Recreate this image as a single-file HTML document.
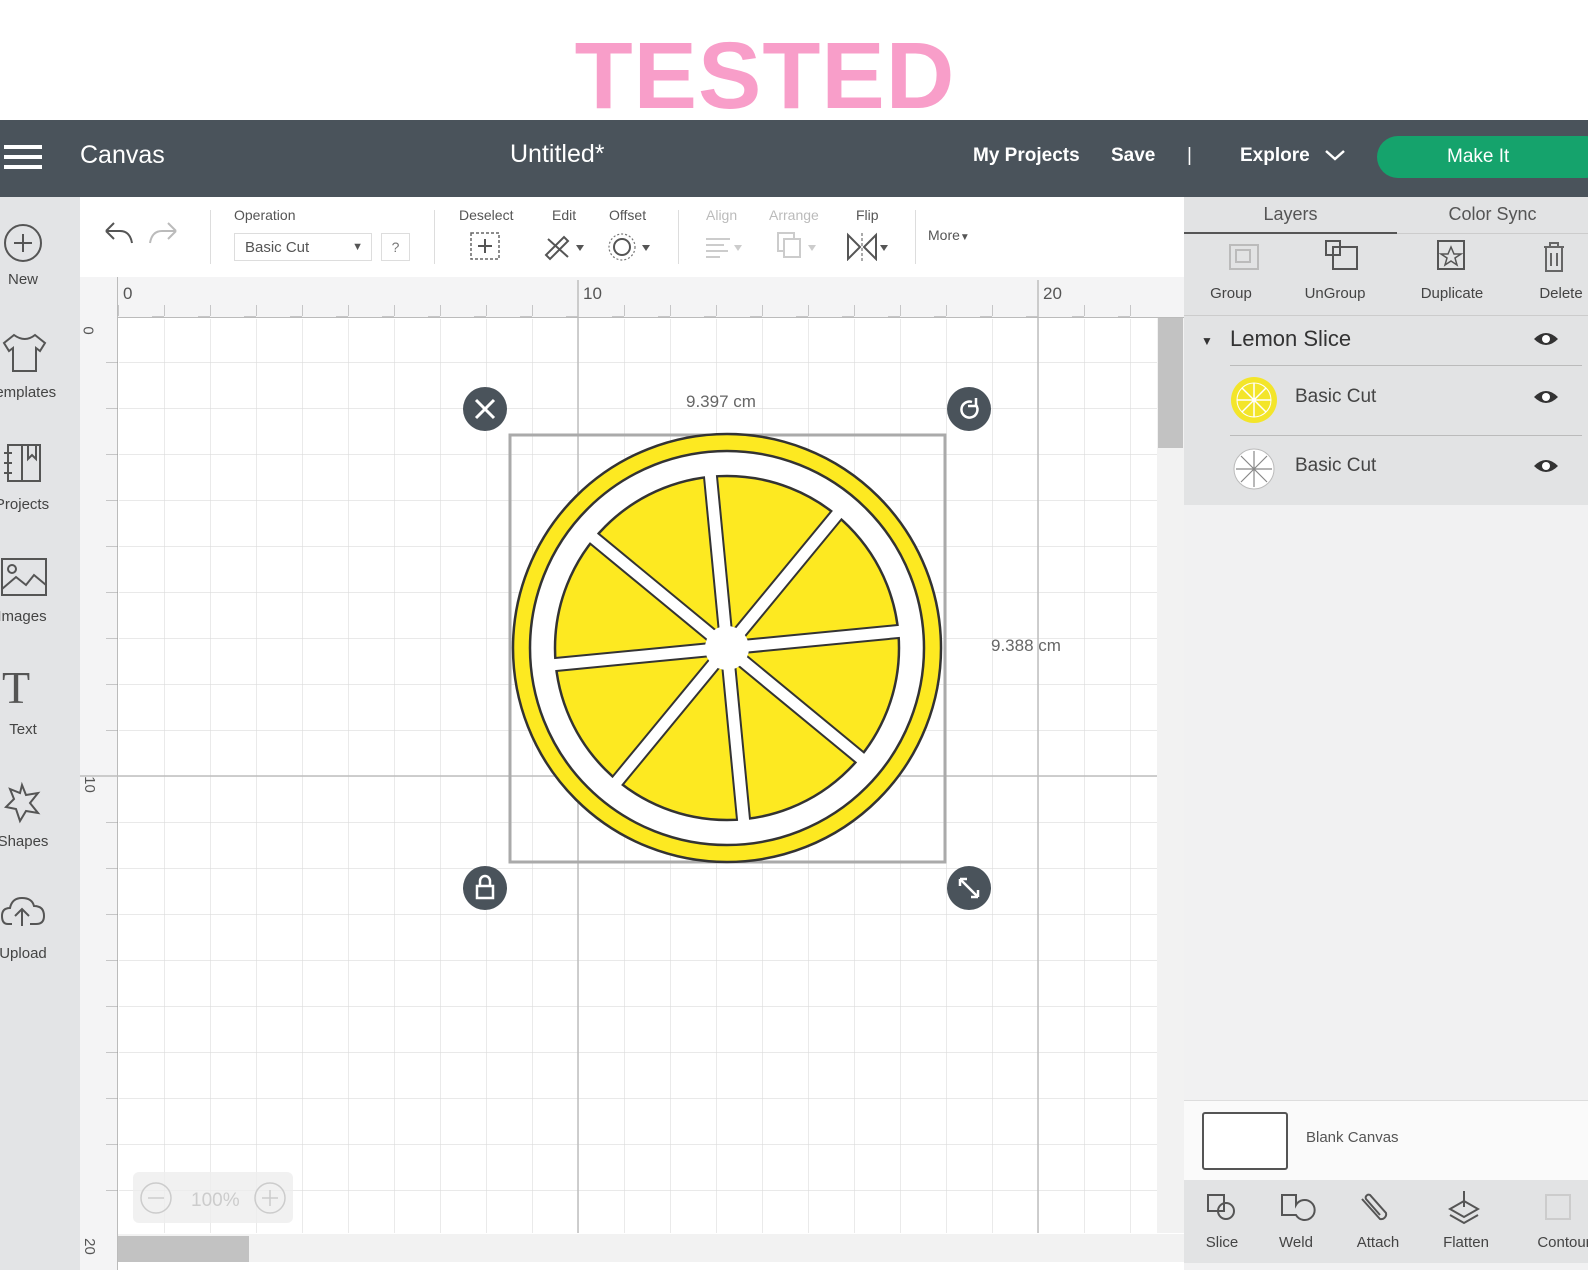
<!DOCTYPE html>
<html><head><meta charset="utf-8"><style>
*{margin:0;padding:0;box-sizing:border-box}
body{width:1588px;height:1270px;overflow:hidden;background:#fff;font-family:"Liberation Sans",sans-serif;position:relative;color:#333}
.a{position:absolute}
.tested{left:0;width:1530px;top:22px;text-align:center;font-weight:bold;font-size:95px;color:#f89ec9;letter-spacing:1px}
.hdr{left:0;top:120px;width:1588px;height:77px;background:#4a535b;color:#fff}
.side{left:0;top:197px;width:80px;height:1073px;background:#e3e4e6}
.sl{font-size:15px;color:#444;width:80px;text-align:center}
.tb{left:80px;top:197px;width:1104px;height:80px;background:#fff}
.lbl{font-size:14px;color:#555}
.dim{color:#bbb}
.sep{width:1px;height:54px;background:#ddd;top:210px}
.rp{left:1184px;top:197px;width:404px;height:1073px;background:#f1f1f2}
.pl{font-size:15px;color:#444;text-align:center}
</style></head><body>
<div class="a tested">TESTED</div>

<div class="a hdr">
 <div class="a" style="left:4px;top:25px;width:38px;height:4px;background:#fff;box-shadow:0 10px 0 #fff,0 20px 0 #fff"></div>
 <div class="a" style="left:80px;top:21px;font-size:25px">Canvas</div>
 <div class="a" style="left:510px;top:20px;font-size:25px">Untitled*</div>
 <div class="a" style="left:973px;top:25px;font-size:19px;font-weight:bold">My Projects</div>
 <div class="a" style="left:1111px;top:25px;font-size:19px;font-weight:bold">Save</div>
 <div class="a" style="left:1187px;top:25px;font-size:19px">|</div>
 <div class="a" style="left:1240px;top:25px;font-size:19px;font-weight:bold">Explore</div>
 <svg class="a" style="left:1324px;top:28px" width="22" height="14"><path d="M2 3 L11 11 L20 3" stroke="#fff" stroke-width="2.5" fill="none"/></svg>
 <div class="a" style="left:1377px;top:16px;width:230px;height:42px;border-radius:21px;background:#15a36c;font-size:19px;padding:10px 0 0 70px">Make It</div>
</div>

<div class="a side">
 <svg class="a" style="left:3px;top:26px" width="40" height="40"><circle cx="20" cy="20" r="18" fill="none" stroke="#555" stroke-width="2"/><path d="M20 11V29M11 20H29" stroke="#555" stroke-width="2"/></svg>
 <div class="a sl" style="left:-17px;top:74px">New</div>
 <svg class="a" style="left:0;top:134px" width="48" height="44"><path d="M14 4 L4 12 L9 20 L13 17 L13 40 L36 40 L36 17 L40 20 L45 12 L35 4 Q25 12 14 4Z" fill="none" stroke="#555" stroke-width="2"/></svg>
 <div class="a sl" style="left:-18px;top:187px">Templates</div>
 <svg class="a" style="left:2px;top:246px" width="42" height="42"><rect x="6" y="2" width="32" height="36" fill="none" stroke="#555" stroke-width="2"/><path d="M2 10H10M2 20H10M2 30H10M20 2V38M26 2V16L30 12L34 16V2" fill="none" stroke="#555" stroke-width="2"/></svg>
 <div class="a sl" style="left:-18px;top:299px">Projects</div>
 <svg class="a" style="left:0;top:360px" width="48" height="42"><rect x="2" y="2" width="44" height="36" fill="none" stroke="#555" stroke-width="2"/><circle cx="12" cy="12" r="4" fill="none" stroke="#555" stroke-width="2"/><path d="M2 32L16 20L26 28L34 18L46 28" fill="none" stroke="#555" stroke-width="2"/></svg>
 <div class="a sl" style="left:-18px;top:411px">Images</div>
 <div class="a" style="left:2px;top:464px;font-family:'Liberation Serif',serif;font-size:46px;color:#555">T</div>
 <div class="a sl" style="left:-17px;top:524px">Text</div>
 <svg class="a" style="left:2px;top:584px" width="44" height="44"><path d="M20 4L24 14L36 12L28 22L36 32L24 30L18 40L14 28L4 26L12 18L8 8L18 12Z" fill="none" stroke="#555" stroke-width="2"/></svg>
 <div class="a sl" style="left:-17px;top:636px">Shapes</div>
 <svg class="a" style="left:0;top:697px" width="48" height="36"><path d="M12 30H8Q2 30 2 22Q2 14 10 14Q12 4 22 4Q32 4 34 12Q44 12 44 22Q44 30 36 30H30M22 32V16M15 22L22 15L29 22" fill="none" stroke="#555" stroke-width="2"/></svg>
 <div class="a sl" style="left:-17px;top:748px">Upload</div>
</div>

<div class="a tb">
 <svg class="a" style="left:20px;top:22px" width="80" height="30"><path d="M6 12L14 4M6 12L14 20M6 12H20Q30 12 32 24" fill="none" stroke="#555" stroke-width="2"/><path d="M76 12L68 4M76 12L68 20M76 12H62Q52 12 50 24" fill="none" stroke="#bbb" stroke-width="2"/></svg>
 <div class="a sep" style="left:130px;top:13px"></div>
 <div class="a lbl" style="left:154px;top:10px">Operation</div>
 <div class="a" style="left:154px;top:36px;width:138px;height:28px;border:1px solid #ddd;font-size:15px;color:#555;padding:5px 10px">Basic Cut<span style="position:absolute;right:8px;font-size:11px;top:7px">▼</span></div>
 <div class="a" style="left:301px;top:36px;width:29px;height:28px;border:1px solid #ddd;font-size:14px;color:#777;text-align:center;padding-top:5px">?</div>
 <div class="a sep" style="left:354px;top:13px"></div>
 <div class="a lbl" style="left:379px;top:10px">Deselect</div>
 <svg class="a" style="left:388px;top:34px" width="34" height="30"><rect x="3" y="2" width="28" height="26" fill="none" stroke="#666" stroke-width="1.5" stroke-dasharray="3 2"/><path d="M17 8V22M10 15H24" stroke="#555" stroke-width="2"/></svg>
 <div class="a lbl" style="left:472px;top:10px">Edit</div>
 <svg class="a" style="left:462px;top:34px" width="46" height="30"><path d="M4 24L22 6L26 10L8 28Z M6 8L26 26" fill="none" stroke="#555" stroke-width="2"/><path d="M34 14L38 20L42 14Z" fill="#555"/></svg>
 <div class="a lbl" style="left:529px;top:10px">Offset</div>
 <svg class="a" style="left:528px;top:34px" width="46" height="30"><circle cx="14" cy="16" r="8" fill="none" stroke="#555" stroke-width="2"/><circle cx="14" cy="16" r="13" fill="none" stroke="#777" stroke-width="1.2" stroke-dasharray="2 2"/><path d="M34 14L38 20L42 14Z" fill="#555"/></svg>
 <div class="a sep" style="left:598px;top:13px"></div>
 <div class="a lbl dim" style="left:626px;top:10px">Align</div>
 <svg class="a" style="left:620px;top:34px" width="46" height="30"><path d="M6 8H30M6 14H24M6 20H28M6 26H20" stroke="#ccc" stroke-width="2"/><path d="M34 14L38 20L42 14Z" fill="#ccc"/></svg>
 <div class="a lbl dim" style="left:689px;top:10px">Arrange</div>
 <svg class="a" style="left:694px;top:32px" width="46" height="34"><rect x="4" y="4" width="16" height="18" fill="none" stroke="#ccc" stroke-width="2"/><rect x="10" y="10" width="16" height="18" fill="#fff" stroke="#ccc" stroke-width="2"/><path d="M34 16L38 22L42 16Z" fill="#ccc"/></svg>
 <div class="a lbl" style="left:776px;top:10px">Flip</div>
 <svg class="a" style="left:764px;top:34px" width="48" height="30"><path d="M4 4L16 16L4 28Z M32 4L20 16L32 28Z" fill="none" stroke="#555" stroke-width="2"/><path d="M18 2V30" stroke="#555" stroke-dasharray="3 2"/><path d="M36 14L40 20L44 14Z" fill="#555"/></svg>
 <div class="a sep" style="left:835px;top:13px"></div>
 <div class="a lbl" style="left:848px;top:30px">More<span style="font-size:10px">▼</span></div>
</div>

<div class="a" style="left:80px;top:277px;width:1104px;height:41px;background:#f4f4f5;border-bottom:1px solid #bbb"></div>
<div class="a" style="left:80px;top:277px;width:38px;height:993px;background:#f4f4f5;border-right:1px solid #bbb"></div>
<div class="a" style="left:123px;top:284px;font-size:17px;color:#555">0</div>
<div class="a" style="left:583px;top:284px;font-size:17px;color:#555">10</div>
<div class="a" style="left:1043px;top:284px;font-size:17px;color:#555">20</div>
<div class="a" style="left:84px;top:322px;font-size:15px;color:#555;transform:rotate(90deg)">0</div>
<div class="a" style="left:81px;top:776px;font-size:15px;color:#555;transform:rotate(90deg)">10</div>
<div class="a" style="left:81px;top:1238px;font-size:15px;color:#555;transform:rotate(90deg)">20</div>

<svg class="a" style="left:0;top:0" width="1588" height="1270">
 <defs>
  <pattern id="g" x="118" y="316" width="46" height="46" patternUnits="userSpaceOnUse"><path d="M0 0V46M0 0H46" stroke="#dcdcdc" stroke-width="1.2"/></pattern>
  <pattern id="t" x="118" y="316" width="46" height="46" patternUnits="userSpaceOnUse"><path d="M0 34V46M34 0H46" stroke="#999" stroke-width="1"/></pattern>
 </defs>
 <rect x="119" y="319" width="1038" height="914" fill="url(#g)"/>
 <rect x="118" y="305" width="1040" height="13" fill="url(#t)"/>
 <rect x="106" y="318" width="12" height="916" fill="url(#t)"/>
 <path d="M578 280V1233M1038 280V1233M80 776H1157" stroke="#bdbdbd" stroke-width="1.5"/>
 <rect x="1157" y="318" width="27" height="915" fill="#f2f2f2"/>
 <rect x="1158" y="318" width="25" height="130" fill="#c2c2c2"/>
 <rect x="118" y="1234" width="1066" height="28" fill="#f2f2f2"/>
 <rect x="118" y="1236" width="131" height="26" fill="#c2c2c2"/>
 <rect x="133" y="1172" width="160" height="51" rx="6" fill="#eee" opacity=".8"/>
 <circle cx="156" cy="1198" r="15" fill="none" stroke="#ccc" stroke-width="1.5"/><path d="M148 1198H164" stroke="#ccc" stroke-width="1.5"/>
 <circle cx="270" cy="1198" r="15" fill="none" stroke="#ccc" stroke-width="1.5"/><path d="M262 1198H278M270 1190V1206" stroke="#ccc" stroke-width="1.5"/>
 <text x="191" y="1206" font-family="Liberation Sans" font-size="19" fill="#ccc">100%</text>

 <rect x="510" y="435" width="435" height="427" fill="none" stroke="#aaa" stroke-width="3"/>
 <g transform="translate(727,648)">
  <circle r="214" fill="#fde921" stroke="#333" stroke-width="2.5"/>
  <circle r="197" fill="#fff" stroke="#333" stroke-width="2.5"/>
  <circle r="172" fill="#fde921" stroke="#333" stroke-width="2.5"/>
  <g>
   <g stroke="#333" stroke-width="15" stroke-linecap="butt">
    <path d="M0 0L172 0" transform="rotate(-95.5)"/><path d="M0 0L172 0" transform="rotate(-50.5)"/><path d="M0 0L172 0" transform="rotate(-5.5)"/><path d="M0 0L172 0" transform="rotate(39.5)"/><path d="M0 0L172 0" transform="rotate(84.5)"/><path d="M0 0L172 0" transform="rotate(129.5)"/><path d="M0 0L172 0" transform="rotate(174.5)"/><path d="M0 0L172 0" transform="rotate(219.5)"/>
   </g>
   <g stroke="#fff" stroke-width="11">
    <path d="M0 0L180 0" transform="rotate(-95.5)"/><path d="M0 0L180 0" transform="rotate(-50.5)"/><path d="M0 0L180 0" transform="rotate(-5.5)"/><path d="M0 0L180 0" transform="rotate(39.5)"/><path d="M0 0L180 0" transform="rotate(84.5)"/><path d="M0 0L180 0" transform="rotate(129.5)"/><path d="M0 0L180 0" transform="rotate(174.5)"/><path d="M0 0L180 0" transform="rotate(219.5)"/>
   </g>
   <circle r="22" fill="#fff"/>
  </g>
 </g>
 <text x="686" y="407" font-family="Liberation Sans" font-size="17" fill="#666">9.397 cm</text>
 <text x="991" y="651" font-family="Liberation Sans" font-size="17" fill="#666">9.388 cm</text>
 <g fill="#4a535b">
  <circle cx="485" cy="409" r="22"/><circle cx="969" cy="409" r="22"/><circle cx="485" cy="888" r="22"/><circle cx="969" cy="888" r="22"/>
 </g>
 <path d="M476 400L494 418M494 400L476 418" stroke="#fff" stroke-width="3"/>
 <path d="M976 405A8 8 0 1 1 972 402M976 398V406H968" fill="none" stroke="#fff" stroke-width="2.5"/>
 <rect x="477" y="886" width="16" height="12" fill="none" stroke="#fff" stroke-width="2.5"/><path d="M480 886V881A5 5 0 0 1 490 881V886" fill="none" stroke="#fff" stroke-width="2.5"/>
 <path d="M960 879L978 897M960 879V886M960 879H967M978 897V890M978 897H971" fill="none" stroke="#fff" stroke-width="2.5"/>
</svg>

<div class="a rp">
 <div class="a" style="left:0;top:0;width:404px;height:308px;background:#e2e3e4"></div>
 <div class="a" style="left:0;top:0;width:213px;top:0;height:37px;border-bottom:2px solid #555;font-size:18px;color:#555;text-align:center;padding-top:7px">Layers</div>
 <div class="a" style="left:213px;top:0;width:191px;height:37px;border-bottom:1px solid #ccc;font-size:18px;color:#555;text-align:center;padding-top:7px">Color Sync</div>
 <svg class="a" style="left:14px;top:40px" width="390" height="40">
  <rect x="32" y="8" width="28" height="24" fill="none" stroke="#bbb" stroke-width="2"/><rect x="38" y="13" width="14" height="12" fill="none" stroke="#bbb" stroke-width="2"/>
  <rect x="135" y="10" width="24" height="22" fill="none" stroke="#555" stroke-width="2"/><rect x="128" y="4" width="14" height="14" fill="none" stroke="#555" stroke-width="2"/>
  <rect x="240" y="4" width="26" height="28" fill="none" stroke="#555" stroke-width="2"/><path d="M253 10L256 17L263 17L257 21L259 28L253 24L247 28L249 21L243 17L250 17Z" fill="none" stroke="#555" stroke-width="1.5"/>
  <path d="M346 10H366M352 10V6H360V10M348 10V34H364V10M353 16V29M359 16V29" fill="none" stroke="#666" stroke-width="2"/>
 </svg>
 <div class="a pl dim" style="left:17px;top:88px;width:60px">Group</div>
 <div class="a pl" style="left:113px;top:88px;width:76px">UnGroup</div>
 <div class="a pl" style="left:225px;top:88px;width:86px">Duplicate</div>
 <div class="a pl" style="left:342px;top:88px;width:70px">Delete</div>
 <div class="a" style="left:0;top:118px;width:404px;height:1px;background:#ccc"></div>
 <div class="a" style="left:17px;top:137px;font-size:12px;color:#333">▼</div>
 <div class="a" style="left:46px;top:129px;font-size:22px;color:#333">Lemon Slice</div>
 <div class="a" style="left:46px;top:168px;width:352px;height:1px;background:#bbb"></div>
 <div class="a" style="left:46px;top:238px;width:352px;height:1px;background:#bbb"></div>
 <svg class="a" style="left:46px;top:180px" width="50" height="120">
  <circle cx="24" cy="23" r="23" fill="#f3e52a"/><circle cx="24" cy="23" r="17" fill="none" stroke="#fff" stroke-width="1"/>
  <path d="M24 6V40M7 23H41M12 11L36 35M36 11L12 35" stroke="#fff" stroke-width="1.5"/>
  <circle cx="24" cy="92" r="20" fill="#fff" stroke="#bbb"/><path d="M24 74V110M6 92H42M11 79L37 105M37 79L11 105" stroke="#888" stroke-width="1.2"/>
 </svg>
 <div class="a" style="left:111px;top:189px;font-size:19px;color:#444">Basic Cut</div>
 <div class="a" style="left:111px;top:258px;font-size:19px;color:#444">Basic Cut</div>
 <svg class="a" style="left:348px;top:130px" width="28" height="150">
  <g fill="#333"><path d="M2 12Q14 0 26 12Q14 24 2 12Z"/><path d="M2 70Q14 58 26 70Q14 82 2 70Z"/><path d="M2 139Q14 127 26 139Q14 151 2 139Z"/></g>
  <g fill="#fff"><circle cx="14" cy="12" r="4"/><circle cx="14" cy="70" r="4"/><circle cx="14" cy="139" r="4"/></g>
 </svg>
 <div class="a" style="left:0;top:903px;width:404px;height:80px;background:#fafafa;border-top:1px solid #ddd"></div>
 <div class="a" style="left:18px;top:915px;width:86px;height:58px;background:#fff;border:2px solid #555;border-radius:3px"></div>
 <div class="a" style="left:122px;top:932px;font-size:15px;color:#555">Blank Canvas</div>
 <div class="a" style="left:0;top:983px;width:404px;height:83px;background:#e2e3e4"></div>
 <svg class="a" style="left:0;top:990px" width="404" height="40">
  <rect x="24" y="8" width="16" height="16" fill="none" stroke="#555" stroke-width="2"/><circle cx="42" cy="24" r="8" fill="none" stroke="#555" stroke-width="2"/>
  <path d="M98 8H112V18A10 10 0 1 1 112 28H98Z" fill="none" stroke="#555" stroke-width="2"/>
  <path d="M178 12L196 32A5 5 0 0 0 202 26L186 8A3 3 0 0 0 182 12L196 28" fill="none" stroke="#555" stroke-width="2"/>
  <path d="M266 22L280 14L294 22L280 30Z M266 28L280 36L294 28 M280 4V20" fill="none" stroke="#555" stroke-width="2"/>
  <rect x="362" y="8" width="24" height="24" fill="none" stroke="#ccc" stroke-width="2"/>
 </svg>
 <div class="a pl" style="left:18px;top:1037px;width:40px">Slice</div>
 <div class="a pl" style="left:92px;top:1037px;width:40px">Weld</div>
 <div class="a pl" style="left:164px;top:1037px;width:60px">Attach</div>
 <div class="a pl" style="left:252px;top:1037px;width:60px">Flatten</div>
 <div class="a pl dim" style="left:345px;top:1037px;width:70px">Contour</div>
</div>
</body></html>
